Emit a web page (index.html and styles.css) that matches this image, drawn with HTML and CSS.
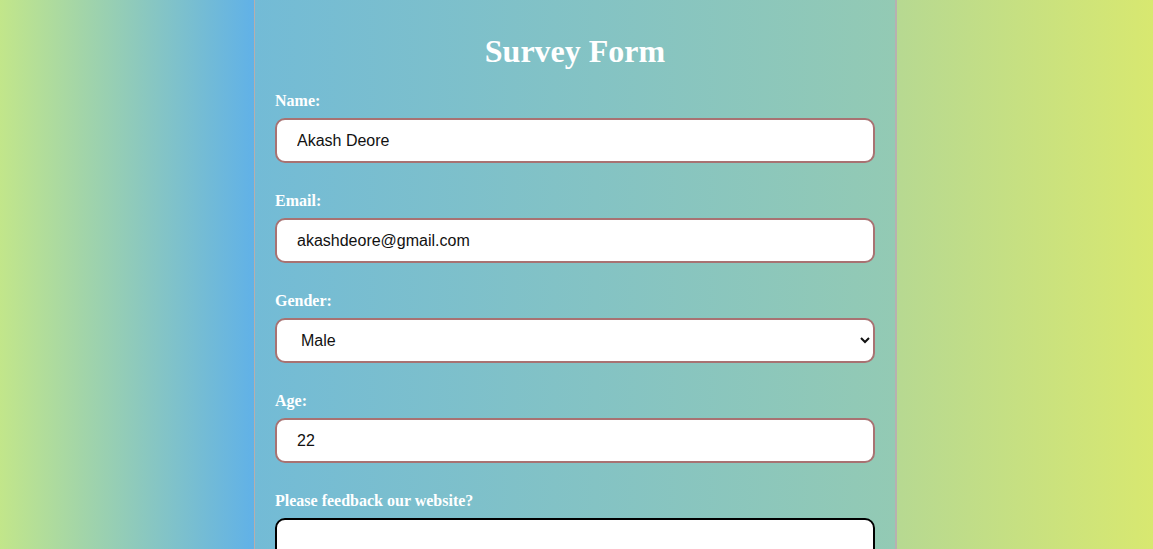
FILE: index.html
```html
<!DOCTYPE html>
<html>
<head>
<meta charset="utf-8">
<link rel="stylesheet" href="styles.css">
</head>
<body>
<div class="container">
  <h1 class="title">Survey Form</h1>
  <form class="form">
    <div class="group">
      <label class="label">Name:</label>
      <input class="field" type="text" value="Akash Deore">
    </div>
    <div class="group">
      <label class="label">Email:</label>
      <input class="field" type="email" value="akashdeore@gmail.com">
    </div>
    <div class="group">
      <label class="label">Gender:</label>
      <select class="field select">
        <option>Male</option>
        <option>Female</option>
      </select>
    </div>
    <div class="group">
      <label class="label">Age:</label>
      <input class="field" type="number" value="22">
    </div>
    <div class="group">
      <label class="label">Please feedback our website?</label>
      <textarea class="field area"></textarea>
    </div>
  </form>
</div>
</body>
</html>
```

FILE: styles.css
```css
html, body {
  margin: 0;
  height: 100%;
}
body {
  background: linear-gradient(to right, #c2e68a 0%, #62b2e6 21.7%, #d8e870 100%);
  font-family: "Liberation Serif", "Times New Roman", serif;
  overflow: hidden;
  padding-right: 2px;
  box-sizing: border-box;
}
.container {
  width: 600px;
  margin: 0 auto;
  padding: 33px 20px 40px;
  min-height: 100%;
  box-sizing: content-box;
  background: linear-gradient(to right, #73bbd6, #93cab4);
  border-left: 1px solid #b6aeae;
  border-right: 2px solid #b8b0b0;
}
.title {
  margin: 0 0 21px;
  text-align: center;
  color: #fff;
  font-size: 32px;
  line-height: 37px;
  font-weight: bold;
}
.form {
  display: flex;
  flex-direction: column;
  gap: 28px;
}
.group {
  display: flex;
  flex-direction: column;
  gap: 8px;
}
.label {
  color: #fff;
  font-weight: bold;
  font-size: 16px;
  line-height: 19px;
}
.field {
  box-sizing: border-box;
  width: 600px;
  height: 45px;
  border: 2px solid #a87272;
  border-radius: 10px;
  background: #fff;
  padding: 0 20px;
  font-family: "Liberation Sans", Arial, sans-serif;
  font-size: 16px;
  color: #111;
  outline: none;
}
.area {
  height: 100px;
  border-color: #000;
  resize: none;
}
```
